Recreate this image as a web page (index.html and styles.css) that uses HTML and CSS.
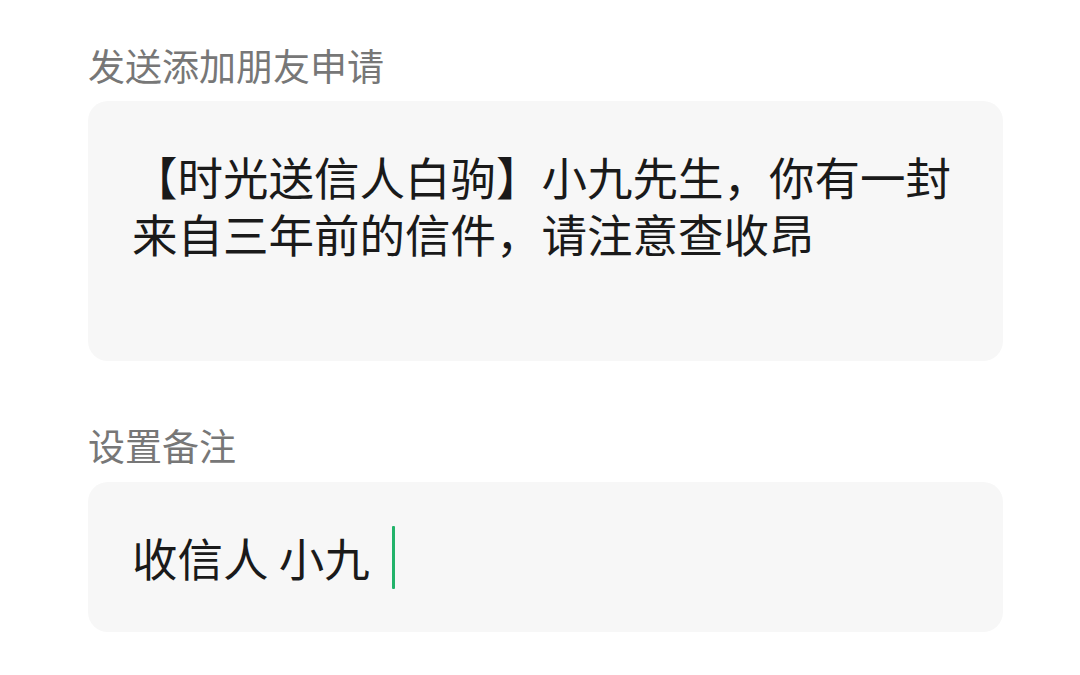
FILE: index.html
```html
<!DOCTYPE html>
<html lang="zh-CN">
<head>
<meta charset="utf-8">
<link rel="stylesheet" href="styles.css">
</head>
<body>
<div class="page">
  <div class="label">发送添加朋友申请</div>
  <div class="box box-request">
    <div class="box-text">【时光送信人白驹】小九先生，你有一封来自三年前的信件，请注意查收昂</div>
  </div>
  <div class="label label-second">设置备注</div>
  <div class="box box-remark">
    <span class="box-text">收信人 小九</span><span class="cursor"></span>
  </div>
</div>
</body>
</html>
```
FILE: styles.css
```css
html, body {
  margin: 0;
  padding: 0;
  background: #ffffff;
}
body {
  font-family: "Noto Sans CJK SC", "Noto Sans", sans-serif;
}
.page {
  width: 1080px;
  height: 675px;
  padding: 40px 0 0 88px;
  box-sizing: border-box;
  overflow: hidden;
}
.label {
  font-size: 37px;
  line-height: 50px;
  color: #777777;
  height: 50px;
  margin-bottom: 11px;
}
.label-second {
  margin-top: 59px;
  margin-bottom: 12px;
}
.box {
  width: 915px;
  background: #f7f7f7;
  border-radius: 20px;
  box-sizing: border-box;
}
.box-request {
  height: 260px;
  padding: 47px 40px 0 44px;
}
.box-request .box-text {
  font-size: 45.5px;
  line-height: 57px;
  color: #1a1a1a;
  width: 840px;
}
.box-remark {
  height: 150px;
  padding: 0 44px;
  display: flex;
  align-items: center;
}
.box-remark .box-text {
  font-size: 45.5px;
  line-height: 57px;
  color: #1a1a1a;
}
.cursor {
  display: inline-block;
  width: 3px;
  height: 63px;
  background: #22b36a;
  margin-left: 22px;
  border-radius: 1px;
}
```
